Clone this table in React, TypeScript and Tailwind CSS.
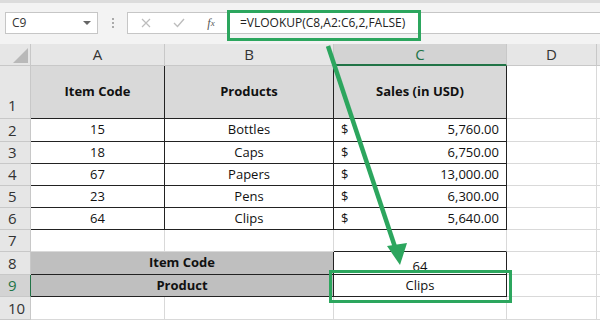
import { ReactNode } from 'react';

const GREEN = '#2ca65e';

type CellProps = {
  children?: ReactNode;
  className?: string;
};

function Cell({ children, className = '' }: CellProps) {
  return <div className={`flex items-center border-r border-b ${className}`}>{children}</div>;
}

const data = [
  { code: '15', product: 'Bottles', sales: '5,760.00' },
  { code: '18', product: 'Caps', sales: '6,750.00' },
  { code: '67', product: 'Papers', sales: '13,000.00' },
  { code: '23', product: 'Pens', sales: '6,300.00' },
  { code: '64', product: 'Clips', sales: '5,640.00' },
];

function cn(...c: string[]) {
  return c.filter(Boolean).join(' ');
}

function RowHead({ n, active = false }: { n: number; active?: boolean }) {
  return (
    <div
      className={cn(
        'flex items-center pl-[8px] border-b border-r border-[#c8c8c8] text-[15px]',
        active ? 'bg-[#d3d3d3] text-[#217346] border-r-[#217346]' : 'bg-[#e6e6e6] text-[#333]'
      )}
    >
      {n}
    </div>
  );
}

export default function App() {
  return (
    <div className="relative w-[600px] h-[321px] overflow-hidden bg-white font-['Open_Sans',sans-serif] text-[#111]">
      {/* toolbar */}
      <div className="h-[44px] bg-[#f3f3f3] border-t-[3px] border-[#dcdcdc] flex items-start pt-[9px]">
        <div className="ml-[5px] w-[93px] h-[22px] bg-white border border-[#c6c6c6] flex items-center justify-between pl-[6px] pr-[6px] text-[12px] text-[#333]">
          <span>C9</span>
          <span className="w-0 h-0 border-l-[4px] border-r-[4px] border-t-[4px] border-l-transparent border-r-transparent border-t-[#666]" />
        </div>
        <div className="w-[29px] h-[22px] flex flex-col items-center justify-center gap-[2px]">
          <span className="w-[2px] h-[2px] bg-[#aaa]" />
          <span className="w-[2px] h-[2px] bg-[#aaa]" />
          <span className="w-[2px] h-[2px] bg-[#aaa]" />
        </div>
        <div className="flex-1 h-[22px] bg-white border border-[#c6c6c6] border-r-0 flex items-center">
          <div className="w-[35px] flex justify-center">
            <svg width="10" height="10" viewBox="0 0 10 10" stroke="#bdbdbd" strokeWidth="1.2">
              <path d="M1 1 L9 9 M9 1 L1 9" />
            </svg>
          </div>
          <div className="w-[32px] flex justify-center">
            <svg width="12" height="10" viewBox="0 0 12 10" fill="none" stroke="#bdbdbd" strokeWidth="1.4">
              <path d="M1 5 L4.5 8.5 L11 1" />
            </svg>
          </div>
          <div className="w-[32px] flex justify-center text-[12px] italic font-['Liberation_Serif',serif] text-[#555]">
            f<span className="text-[9px] mt-[3px]">x</span>
          </div>
          <span className="ml-[13px] text-[12px] text-[#222]">=VLOOKUP(C8,A2:C6,2,FALSE)</span>
        </div>
      </div>

      {/* sheet */}
      <div className="grid grid-cols-[31px_134px_169px_173px_90px_1fr] grid-rows-[22px_53px_23px_22px_22px_22px_22px_22px_23px_22px_23px] text-[13px]">
        {/* column headers */}
        <div className="bg-[#e6e6e6] border-r border-b border-[#c8c8c8] relative">
          <svg className="absolute left-[13px] top-[4px]" width="15" height="15" viewBox="0 0 15 15">
            <path d="M15 0 L15 15 L0 15 Z" fill="#b9b9b9" />
          </svg>
        </div>
        {['A', 'B'].map((c) => (
          <div key={c} className="bg-[#e6e6e6] border-r border-b border-[#c8c8c8] flex items-center justify-center text-[15px] text-[#333]">
            {c}
          </div>
        ))}
        <div className="bg-[#d3d3d3] border-r border-[#c8c8c8] border-b-2 border-b-[#217346] flex items-center justify-center text-[15px] text-[#217346]">
          C
        </div>
        <div className="bg-[#e6e6e6] border-r border-b border-[#c8c8c8] flex items-center justify-center text-[15px] text-[#333]">
          D
        </div>
        <div className="bg-[#e6e6e6] border-b border-[#c8c8c8]" />

        {/* row 1 */}
        <div className="flex items-end pl-[8px] pb-[2px] border-b border-r border-[#c8c8c8] bg-[#e6e6e6] text-[15px] text-[#333]">1</div>
        <Cell className="bg-[#d9d9d9] border-[#222] justify-center font-bold">Item Code</Cell>
        <Cell className="bg-[#d9d9d9] border-[#222] justify-center font-bold">Products</Cell>
        <Cell className="bg-[#d9d9d9] border-[#222] justify-center font-bold">Sales (in USD)</Cell>
        <Cell className="border-[#d9d9d9]" />
        <Cell className="border-[#d9d9d9] border-r-0" />

        {data.map((r, i) => (
          <div key={r.code} className="contents">
            <RowHead n={i + 2} />
            <Cell className="border-[#222] justify-center">{r.code}</Cell>
            <Cell className="border-[#222] justify-center">{r.product}</Cell>
            <Cell className="border-[#222] justify-between px-[7px]">
              <span>$</span>
              <span>{r.sales}</span>
            </Cell>
            <Cell className="border-[#d9d9d9]" />
            <Cell className="border-[#d9d9d9] border-r-0" />
          </div>
        ))}

        {/* row 7 */}
        <RowHead n={7} />
        <Cell className="border-[#d9d9d9]" />
        <Cell className="border-[#d9d9d9]" />
        <Cell className="border-[#d9d9d9] border-b-[#222]" />
        <Cell className="border-[#d9d9d9]" />
        <Cell className="border-[#d9d9d9] border-r-0" />

        {/* row 8 */}
        <RowHead n={8} />
        <Cell className="col-span-2 bg-[#bfbfbf] border-[#222] justify-center font-bold">Item Code</Cell>
        <Cell className="border-[#222] justify-center items-end! pb-[0px] leading-[16px]">64</Cell>
        <Cell className="border-[#d9d9d9]" />
        <Cell className="border-[#d9d9d9] border-r-0" />

        {/* row 9 */}
        <RowHead n={9} active />
        <Cell className="col-span-2 bg-[#bfbfbf] border-[#222] justify-center font-bold">Product</Cell>
        <Cell className="border-[#222] justify-center">Clips</Cell>
        <Cell className="border-[#d9d9d9]" />
        <Cell className="border-[#d9d9d9] border-r-0" />

        {/* row 10 */}
        <RowHead n={10} />
        <Cell className="border-[#d9d9d9]" />
        <Cell className="border-[#d9d9d9]" />
        <Cell className="border-[#d9d9d9]" />
        <Cell className="border-[#d9d9d9]" />
        <Cell className="border-[#d9d9d9] border-r-0" />
      </div>

      {/* annotations */}
      <div className="absolute left-[227px] top-[10px] w-[194px] h-[31px] border-[3px]" style={{ borderColor: GREEN }} />
      <div className="absolute left-[329px] top-[270px] w-[183px] h-[33px] border-[3px]" style={{ borderColor: GREEN }} />
      <svg className="absolute left-0 top-0 pointer-events-none" width="600" height="321">
        <line x1="328" y1="46" x2="396" y2="250" stroke={GREEN} strokeWidth="4.5" />
        <polygon points="400,265 387,246 407,243" fill={GREEN} />
      </svg>
    </div>
  );
}
